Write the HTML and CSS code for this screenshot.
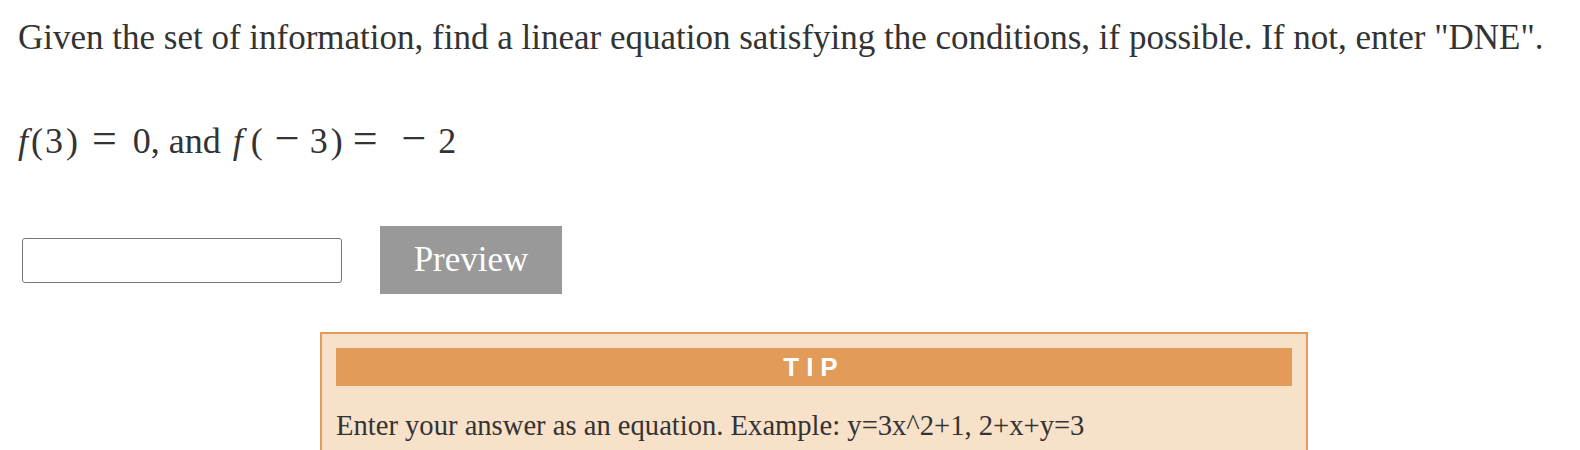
FILE: index.html
```html
<!DOCTYPE html>
<html>
<head>
<meta charset="utf-8">
<link rel="stylesheet" href="styles.css">
</head>
<body>
<div class="page">
  <p class="question">Given the set of information, find a linear equation satisfying the conditions, if possible. If not, enter "DNE".</p>
  <p class="math"><span class="mi f1">f</span><span class="p1">(</span><span class="n1">3</span><span class="p2">)</span><span class="op eq1">=</span><span>0, and </span><span class="mi f2">f</span><span class="p3">(</span><span class="op m1">−</span><span class="n2">3</span><span class="p4">)</span><span class="op eq2">=</span><span class="op m2">−</span><span class="n3">2</span></p>
  <div class="answer">
    <div class="input"></div>
    <div class="btn">Preview</div>
  </div>
  <div class="tip">
    <div class="tip-head">TIP</div>
    <div class="tip-body">Enter your answer as an equation. Example: y=3x^2+1, 2+x+y=3</div>
  </div>
</div>
</body>
</html>
```
FILE: styles.css
```css
html, body { margin: 0; padding: 0; background: #fff; }
body { font-family: "Liberation Serif", "Times New Roman", serif; color: #333; }
.page { padding: 0 0 0 18px; }
.question { margin: 0; padding-top: 18px; font-size: 35px; line-height: 40px; white-space: nowrap; }
.math { margin: 63px 0 0 0; font-size: 36px; line-height: 40px; white-space: pre; }
.mi { font-style: italic; }
.op { font-size: 44px; line-height: 0; }
.f1 { margin-right: 3px; }
.n1 { margin-left: 2px; }
.p2 { margin-left: 3px; }
.eq1 { margin-left: 14px; margin-right: 16px; }
.f2 { margin-left: 3px; margin-right: 8px; }
.m1 { margin-left: 12px; }
.n2 { margin-left: 10px; }
.p4 { margin-left: 3px; }
.eq2 { margin-left: 10px; }
.m2 { margin-left: 24px; }
.n3 { margin-left: 12px; }
.answer { display: flex; align-items: center; margin-top: 65px; padding-left: 4px; gap: 38px; }
.input { width: 318px; height: 43px; border: 1.5px solid #777; border-radius: 3px; }
.btn { width: 182px; height: 68px; background: #999; color: #fff; font-size: 35px; display: flex; align-items: center; justify-content: center; }
.tip { margin-left: 302px; margin-top: 38px; width: 956px; border: 2px solid #e29b58; background: #f8e1c9; padding: 14px 14px 0 14px; height: 200px; }
.tip-head { background: #e29b58; color: #fff; font-family: "Liberation Sans", Arial, sans-serif; font-weight: bold; font-size: 26px; letter-spacing: 7px; text-align: center; height: 38px; line-height: 38px; }
.tip-body { font-size: 28.6px; line-height: 34px; margin-top: 23px; }
```
